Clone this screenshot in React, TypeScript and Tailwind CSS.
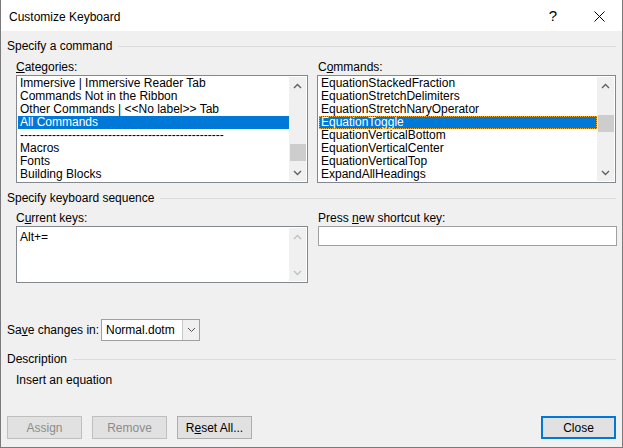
const categories = [
  "Immersive | Immersive Reader Tab",
  "Commands Not in the Ribbon",
  "Other Commands | <<No label>> Tab",
  "All Commands",
  "---------------------------------------------------",
  "Macros",
  "Fonts",
  "Building Blocks",
];

const commands = [
  "EquationStackedFraction",
  "EquationStretchDelimiters",
  "EquationStretchNaryOperator",
  "EquationToggle",
  "EquationVerticalBottom",
  "EquationVerticalCenter",
  "EquationVerticalTop",
  "ExpandAllHeadings",
];

function Chevron({ up, color = "#606060" }: { up?: boolean; color?: string }) {
  return (
    <svg width="9" height="6" viewBox="0 0 9 6">
      <path
        d={up ? "M1 5 L4.5 1.5 L8 5" : "M1 1 L4.5 4.5 L8 1"}
        fill="none"
        stroke={color}
        strokeWidth="1.4"
      />
    </svg>
  );
}

function ScrollBar({ thumbTop, disabled }: { thumbTop?: number; disabled?: boolean }) {
  const c = disabled ? "#c0c0c0" : "#606060";
  return (
    <div className="relative flex w-[17px] flex-col bg-[#f0f0f0]">
      <div className="flex h-[17px] items-center justify-center">
        <Chevron up color={c} />
      </div>
      <div className="flex-1" />
      <div className="flex h-[17px] items-center justify-center">
        <Chevron color={c} />
      </div>
      {thumbTop !== undefined && (
        <div
          className="absolute left-[1px] right-0 h-[17px] bg-[#cdcdcd]"
          style={{ top: thumbTop }}
        />
      )}
    </div>
  );
}

function GroupHeader({ label }: { label: string }) {
  return (
    <div className="flex h-[15px] items-center gap-[6px] leading-[15px]">
      <span>{label}</span>
      <div className="h-px flex-1 bg-[#dcdcdc]" />
    </div>
  );
}

function ListBox({
  items,
  selected,
  thumbTop,
  width,
  focus,
}: {
  items: string[];
  selected: number;
  thumbTop: number;
  width: string;
  focus?: boolean;
}) {
  return (
    <div className={`flex h-[108px] border border-[#828790] bg-white p-px ${width}`}>
      <div className="flex flex-1 flex-col">
        {items.map((t, i) => (
          <div
            key={t}
            className={`h-[13px] whitespace-nowrap pl-[2px] leading-[13px] ${
              i === selected
                ? focus
                  ? "bg-[#0078d7] text-white outline-1 -outline-offset-1 outline-dotted outline-[#f5a623]"
                  : "bg-[#0078d7] text-white"
                : ""
            }`}
          >
            {t}
          </div>
        ))}
      </div>
      <ScrollBar thumbTop={thumbTop} />
    </div>
  );
}

function Button({
  children,
  disabled,
  primary,
}: {
  children: React.ReactNode;
  disabled?: boolean;
  primary?: boolean;
}) {
  return (
    <div
      className={`flex h-[23px] w-[75px] items-center justify-center bg-[#e1e1e1] ${
        primary
          ? "border-2 border-[#0078d7]"
          : disabled
          ? "border border-[#bfbfbf] text-[#8c8c8c]"
          : "border border-[#adadad]"
      }`}
    >
      {children}
    </div>
  );
}

export default function App() {
  return (
    <div
      className="flex h-[448px] w-[623px] flex-col border-x border-b border-[#7a7a7a] bg-[#f0f0f0] text-[12px] text-black"
      style={{ fontFamily: '"Liberation Sans", Arial, sans-serif' }}
    >
      <div className="flex h-[31px] items-center bg-white pl-[8px] pt-[2px]">
        <span className="flex-1">Customize Keyboard</span>
        <span className="w-[20px] text-center text-[15px]">?</span>
        <div className="ml-[29px] mr-[16px] flex w-[14px] items-center justify-center">
          <svg width="11" height="11" viewBox="0 0 11 11">
            <path d="M0.5 0.5 L10.5 10.5 M10.5 0.5 L0.5 10.5" stroke="#000" strokeWidth="1" />
          </svg>
        </div>
      </div>

      <div className="flex flex-1 flex-col px-[6px] pb-[8px]">
        <div className="mt-[8px]">
          <GroupHeader label="Specify a command" />
        </div>

        <div className="ml-[9px] mt-[6px] flex gap-[9px]">
          <div className="flex flex-col">
            <div className="h-[15px] leading-[15px]">
              <u>C</u>ategories:
            </div>
            <ListBox items={categories} selected={3} thumbTop={67} width="w-[292px]" />
          </div>
          <div className="flex flex-col">
            <div className="h-[15px] pl-px leading-[15px]">
              C<u>o</u>mmands:
            </div>
            <ListBox items={commands} selected={3} thumbTop={38} width="w-[299px]" focus />
          </div>
        </div>

        <div className="mt-[8px]">
          <GroupHeader label="Specify keyboard sequence" />
        </div>

        <div className="ml-[9px] mt-[5px] flex gap-[9px]">
          <div className="flex flex-col">
            <div className="h-[15px] leading-[15px]">
              C<u>u</u>rrent keys:
            </div>
            <div className="flex h-[57px] w-[292px] border border-[#828790] bg-white p-px">
              <div className="flex-1 pl-[2px] leading-[18px]">Alt+=</div>
              <ScrollBar disabled />
            </div>
          </div>
          <div className="flex flex-col">
            <div className="h-[15px] pl-px leading-[15px]">
              Press <u>n</u>ew shortcut key:
            </div>
            <div className="ml-px h-[20px] w-[299px] border border-[#a0a0a0] bg-white" />
          </div>
        </div>

        <div className="mt-[36px] flex items-center">
          <span className="w-[94px]">
            Sa<u>v</u>e changes in:
          </span>
          <div className="flex h-[22px] w-[99px] border border-[#a0a0a0] bg-white">
            <span className="flex-1 pl-[4px] leading-[20px]">Normal.dotm</span>
            <div className="flex w-[17px] items-center justify-center border-l border-[#c8c8c8] bg-[#f0f0f0]">
              <svg width="9" height="6" viewBox="0 0 9 6">
                <path d="M1 1 L4.5 4.5 L8 1" fill="none" stroke="#505050" strokeWidth="1" />
              </svg>
            </div>
          </div>
        </div>

        <div className="mt-[11px]">
          <GroupHeader label="Description" />
        </div>
        <div className="ml-[9px] mt-[6px] h-[15px] leading-[15px]">Insert an equation</div>

        <div className="mt-auto flex gap-[10px]">
          <Button disabled>Assign</Button>
          <Button disabled>Remove</Button>
          <Button>
            <span>
              R<u>e</u>set All...
            </span>
          </Button>
          <div className="flex-1" />
          <Button primary>Close</Button>
        </div>
      </div>
    </div>
  );
}
